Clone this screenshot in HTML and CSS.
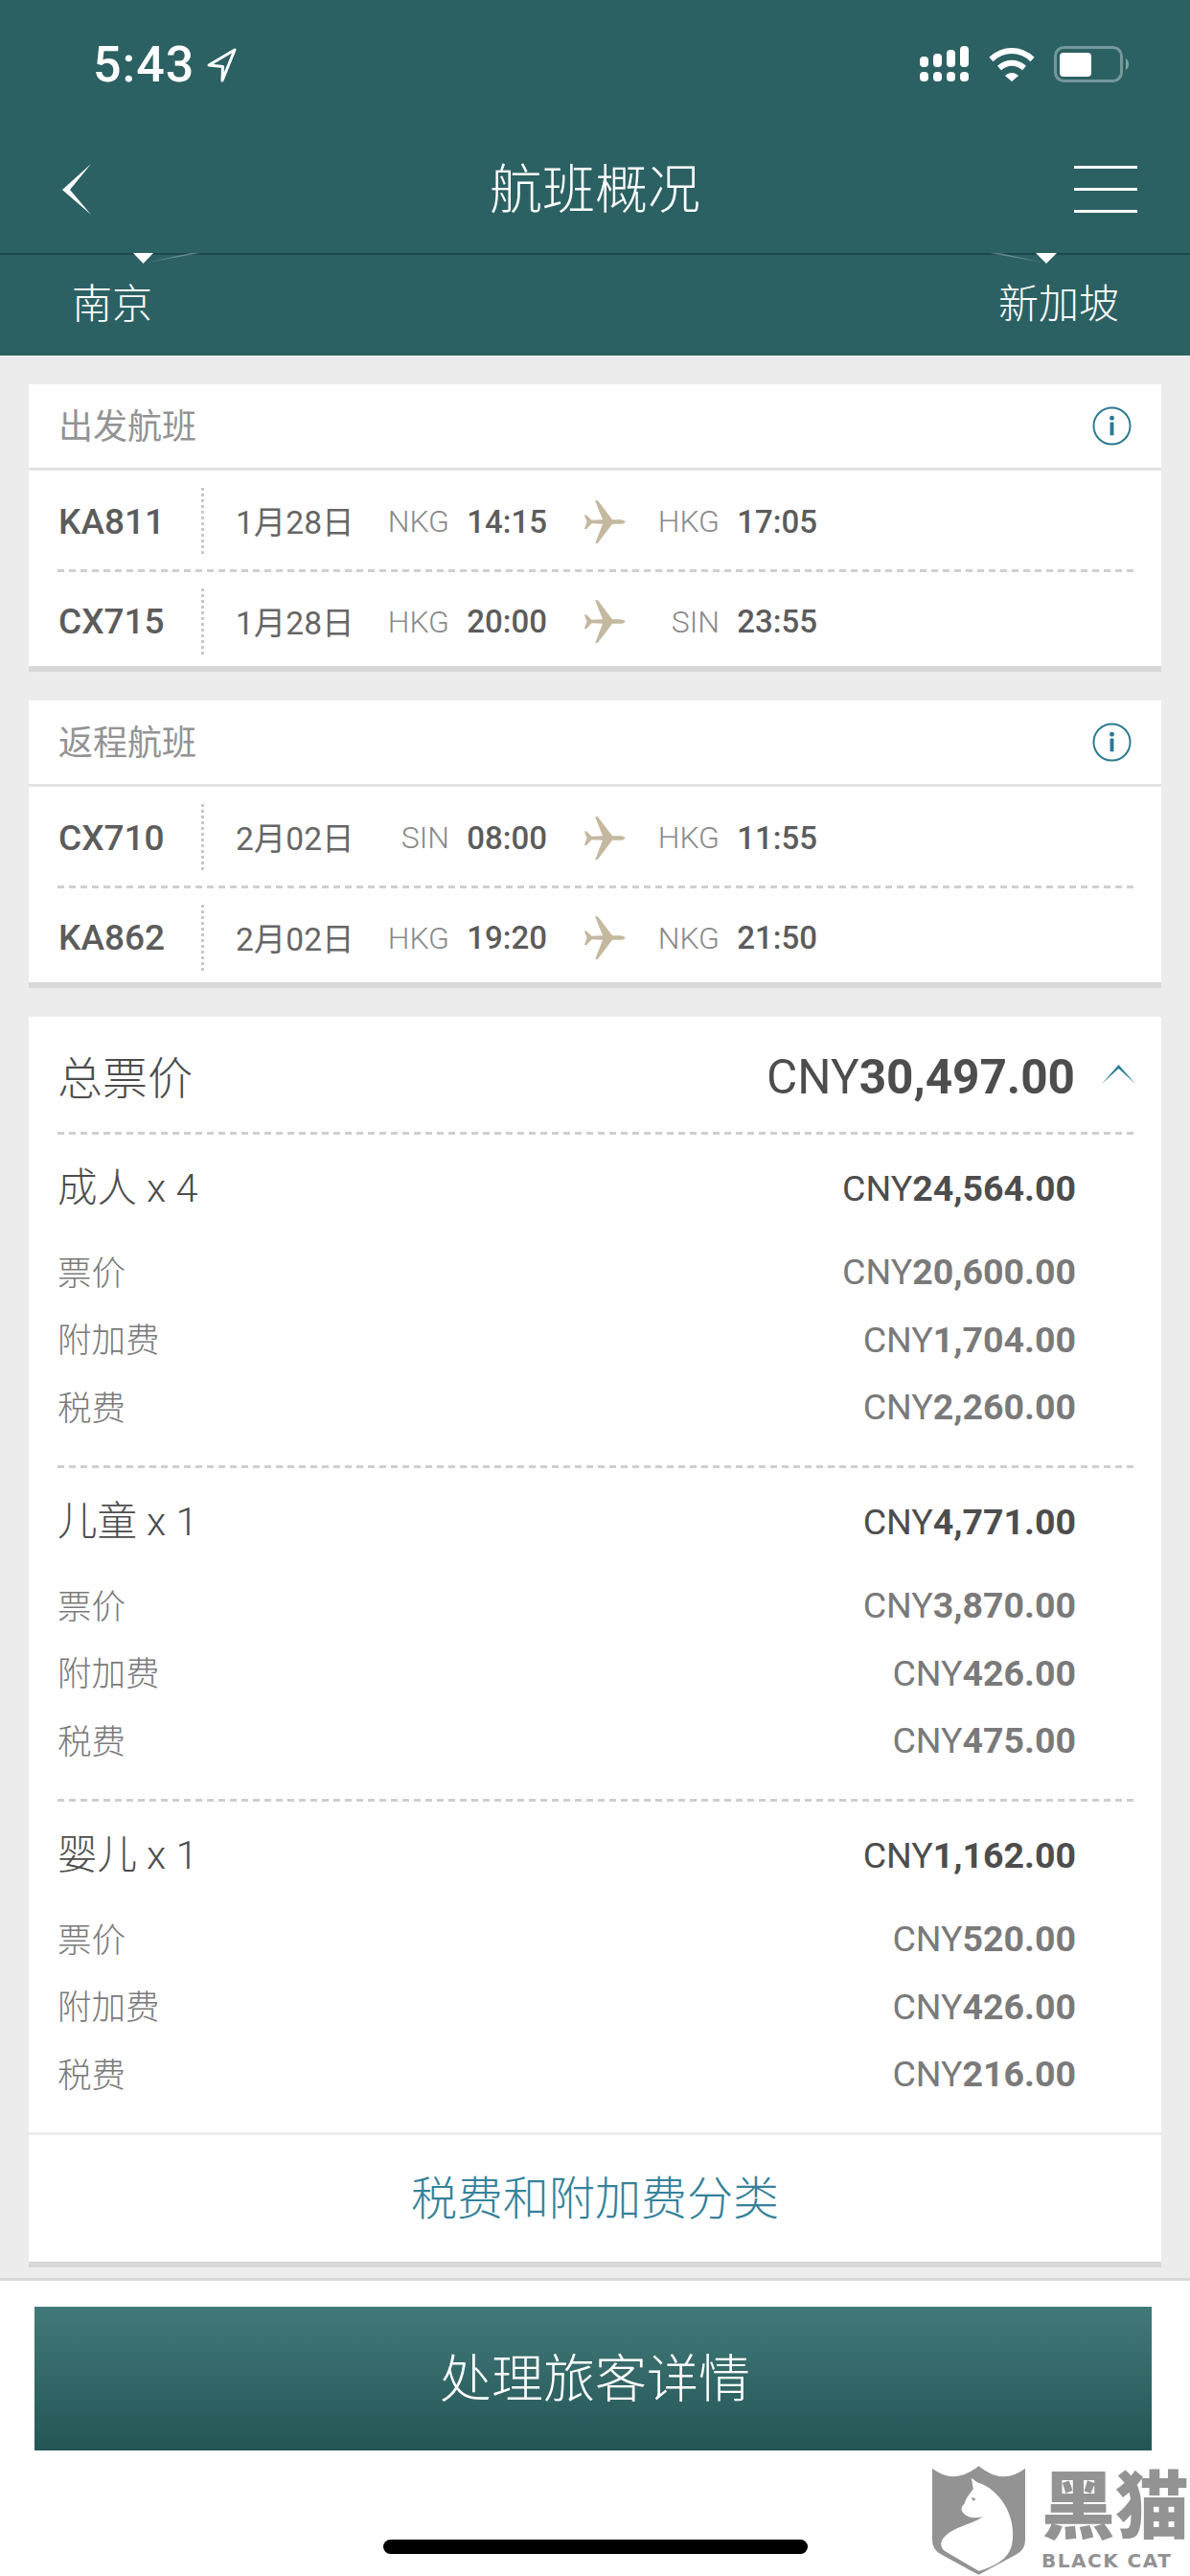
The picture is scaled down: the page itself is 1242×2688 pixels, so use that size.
FILE: index.html
```html
<!DOCTYPE html>
<html lang="zh-CN">
<head>
<meta charset="utf-8">
<title>航班概况</title>
<link rel="stylesheet" href="styles.css">
</head>
<body>
<div class="page">
  <header class="header">
    <div class="status">
      <div class="status-left">
        <span class="clock">5:43</span>
        <svg class="loc" viewBox="0 0 32 36"><path d="M30 2 L3 18 L17.500 19.500 L17 34 Z" fill="none" stroke="#fff" stroke-width="3" stroke-linejoin="round"/></svg>
      </div>
      <div class="status-right">
        <svg class="signal" viewBox="0 0 51 37" fill="#fff">
          <rect x="0" y="11" width="9" height="11" rx="4"/><rect x="14" y="8" width="9" height="14" rx="4"/><rect x="28" y="4" width="9" height="18" rx="4"/><rect x="42" y="0" width="9" height="22" rx="4"/>
          <rect x="0" y="27" width="9" height="10" rx="4"/><rect x="14" y="27" width="9" height="10" rx="4"/><rect x="28" y="27" width="9" height="10" rx="4"/><rect x="42" y="27" width="9" height="10" rx="4"/>
        </svg>
        <svg class="wifi" viewBox="0 0 48 37" fill="none" stroke="#fff" stroke-width="6">
          <path d="M2.500 14 C15 2 33 2 45.500 14"/><path d="M11 23 C19 16 29 16 37 23"/><path d="M17 31 L24 37 L31 31 C27 27 21 27 17 31 Z" fill="#fff" stroke="none"/>
        </svg>
        <svg class="battery" viewBox="0 0 80 38">
          <rect x="1.500" y="1.500" width="69" height="35" rx="9" fill="none" stroke="#fff" stroke-opacity=".35" stroke-width="3"/>
          <rect x="6" y="7" width="33" height="25" rx="4" fill="#fff"/>
          <path d="M75 13 C79 15 79 23 75 25 Z" fill="#fff" fill-opacity=".4"/>
        </svg>
      </div>
    </div>
    <nav class="nav">
      <svg class="back" viewBox="0 0 30 53"><path d="M30 0 L0 27 L30 53 L8 27 Z" fill="#fff"/></svg>
      <h1 class="nav-title">航班概况</h1>
      <div class="menu"><i></i><i></i><i></i></div>
    </nav>
    <div class="route">
      <svg class="marker marker-left" viewBox="0 0 80 12"><path d="M14 10 L70 0 L60 0 Z" fill="#fff" fill-opacity=".3"/><path d="M0 0 H21 L10.500 11 Z" fill="#fff"/></svg>
      <svg class="marker marker-right" viewBox="0 0 80 12"><path d="M66 10 L10 0 L20 0 Z" fill="#fff" fill-opacity=".3"/><path d="M58 0 H80 L69 11 Z" fill="#fff"/></svg>
      <span>南京</span>
      <span>新加坡</span>
    </div>
  </header>

  <main class="main">
    <section class="card">
      <div class="card-head">
        <span class="head-text">出发航班</span>
        <svg class="info" viewBox="0 0 42 42"><circle cx="21" cy="21" r="19.500" fill="none" stroke="#2b7890" stroke-width="2"/><circle cx="21" cy="12.500" r="2.500" fill="#2b7890"/><rect x="19" y="17" width="4" height="14" fill="#2b7890"/></svg>
      </div>
      <div class="flight">
        <span class="fno">KA811</span><span class="vdots"></span><span class="date">1月28日</span><span class="code">NKG</span><span class="time">14:15</span>
        <svg class="plane" viewBox="0 0 128 134"><path d="M128 67C128 71 120 74 108 74L88 74L44 132Q38 136 35 133L58 74L24 72L8 89L1 89L9 67L1 46L8 46L24 62L58 60L35 2Q38-2 44 2L88 60L108 60C120 60 128 63 128 67Z"/></svg>
        <span class="code">HKG</span><span class="time">17:05</span>
      </div>
      <div class="dash"></div>
      <div class="flight flight-last">
        <span class="fno">CX715</span><span class="vdots"></span><span class="date">1月28日</span><span class="code">HKG</span><span class="time">20:00</span>
        <svg class="plane" viewBox="0 0 128 134"><path d="M128 67C128 71 120 74 108 74L88 74L44 132Q38 136 35 133L58 74L24 72L8 89L1 89L9 67L1 46L8 46L24 62L58 60L35 2Q38-2 44 2L88 60L108 60C120 60 128 63 128 67Z"/></svg>
        <span class="code">SIN</span><span class="time">23:55</span>
      </div>
    </section>

    <section class="card">
      <div class="card-head">
        <span class="head-text">返程航班</span>
        <svg class="info" viewBox="0 0 42 42"><circle cx="21" cy="21" r="19.500" fill="none" stroke="#2b7890" stroke-width="2"/><circle cx="21" cy="12.500" r="2.500" fill="#2b7890"/><rect x="19" y="17" width="4" height="14" fill="#2b7890"/></svg>
      </div>
      <div class="flight">
        <span class="fno">CX710</span><span class="vdots"></span><span class="date">2月02日</span><span class="code">SIN</span><span class="time">08:00</span>
        <svg class="plane" viewBox="0 0 128 134"><path d="M128 67C128 71 120 74 108 74L88 74L44 132Q38 136 35 133L58 74L24 72L8 89L1 89L9 67L1 46L8 46L24 62L58 60L35 2Q38-2 44 2L88 60L108 60C120 60 128 63 128 67Z"/></svg>
        <span class="code">HKG</span><span class="time">11:55</span>
      </div>
      <div class="dash"></div>
      <div class="flight flight-last">
        <span class="fno">KA862</span><span class="vdots"></span><span class="date">2月02日</span><span class="code">HKG</span><span class="time">19:20</span>
        <svg class="plane" viewBox="0 0 128 134"><path d="M128 67C128 71 120 74 108 74L88 74L44 132Q38 136 35 133L58 74L24 72L8 89L1 89L9 67L1 46L8 46L24 62L58 60L35 2Q38-2 44 2L88 60L108 60C120 60 128 63 128 67Z"/></svg>
        <span class="code">NKG</span><span class="time">21:50</span>
      </div>
    </section>

    <section class="card">
      <div class="total">
        <span class="total-label">总票价</span>
        <span class="total-value">CNY<b>30,497.00</b></span>
        <svg class="chev" viewBox="0 0 35 20"><path d="M0 20 L17.500 0 L35 20 L17.500 4 Z" fill="#2b7f95"/></svg>
      </div>
      <div class="dash"></div>
      <div class="group">
        <div class="row row-head"><span class="label">成人 x 4</span><span class="amount">CNY<b>24,564.00</b></span></div>
        <div class="row"><span class="label">票价</span><span class="amount">CNY<b>20,600.00</b></span></div>
        <div class="row"><span class="label">附加费</span><span class="amount">CNY<b>1,704.00</b></span></div>
        <div class="row"><span class="label">税费</span><span class="amount">CNY<b>2,260.00</b></span></div>
      </div>
      <div class="dash"></div>
      <div class="group">
        <div class="row row-head"><span class="label">儿童 x 1</span><span class="amount">CNY<b>4,771.00</b></span></div>
        <div class="row"><span class="label">票价</span><span class="amount">CNY<b>3,870.00</b></span></div>
        <div class="row"><span class="label">附加费</span><span class="amount">CNY<b>426.00</b></span></div>
        <div class="row"><span class="label">税费</span><span class="amount">CNY<b>475.00</b></span></div>
      </div>
      <div class="dash"></div>
      <div class="group">
        <div class="row row-head"><span class="label">婴儿 x 1</span><span class="amount">CNY<b>1,162.00</b></span></div>
        <div class="row"><span class="label">票价</span><span class="amount">CNY<b>520.00</b></span></div>
        <div class="row"><span class="label">附加费</span><span class="amount">CNY<b>426.00</b></span></div>
        <div class="row"><span class="label">税费</span><span class="amount">CNY<b>216.00</b></span></div>
      </div>
      <div class="link">税费和附加费分类</div>
    </section>
  </main>

  <footer class="footer">
    <div class="cta">处理旅客详情</div>
    <div class="home"></div>
    <div class="mark">
      <svg class="shield" viewBox="0 0 290 340">
        <path d="M0 8Q70 62 145 0Q220 62 290 8V232Q290 262 262 276L145 340L28 276Q0 262 0 232Z" fill="#939393"/>
        <path d="M122 38L142 52C205 70 262 150 250 235C245 285 205 310 145 328L38 265C26 255 24 240 34 226C60 190 120 185 158 158C135 165 112 162 98 148C88 138 90 128 100 118C105 100 118 85 128 72Z" fill="#fff"/>
        <path d="M122 98L136 102L128 110Z" fill="#939393"/>
      </svg>
      <div class="mark-text">
        <span class="mark-cn">黑猫</span>
        <span class="mark-en">BLACK CAT</span>
      </div>
    </div>
  </footer>
</div>
</body>
</html>
```
FILE: styles.css
```css
* { box-sizing: border-box; }
html, body { margin: 0; padding: 0; }
body {
  width: 1242px;
  height: 2688px;
  overflow: hidden;
  background: #fff;
  font-family: Roboto, "Noto Sans CJK SC", sans-serif;
}
.page { position: relative; width: 1242px; height: 2688px; display: flex; flex-direction: column; }

/* header */
.header { background: #2c6163; color: #fff; height: 371px; display: flex; flex-direction: column; }
.status { height: 130px; display: flex; justify-content: space-between; padding: 48px 62px 0 97px; }
.status-left { display: flex; align-items: flex-start; }
.clock { font-size: 52px; font-weight: 500; line-height: 40px; letter-spacing: 1px; height: 40px; }
.loc { width: 32px; height: 36px; margin: 2px 0 0 12px; }
.status-right { display: flex; align-items: flex-start; }
.signal { width: 51px; height: 37px; }
.wifi { width: 48px; height: 37px; margin-left: 21px; }
.battery { width: 80px; height: 38px; margin-left: 20px; }

.nav { height: 136px; border-bottom: 2px solid #1e474b; display: flex; align-items: center; justify-content: space-between; padding: 0 55px 0 65px; position: relative; }
.back { width: 30px; height: 53px; }
.nav-title { position: absolute; left: 0; right: 0; top: 0; margin: 0; text-align: center; font-size: 55px; font-weight: 300; line-height: 136px; }
.menu { display: flex; flex-direction: column; gap: 20px; width: 66px; }
.menu i { display: block; height: 3px; background: #fff; }

.route { position: relative; flex: 1; display: flex; justify-content: space-between; align-items: center; padding: 0 74px 10px 75px; font-size: 42px; font-weight: 300; }
.marker { position: absolute; top: -2px; width: 80px; height: 12px; }
.marker-left { left: 139px; }
.marker-right { left: 1023px; }

/* main */
.main { background: #ececec; padding: 30px 30px 11px; display: flex; flex-direction: column; gap: 30px; }
.card { background: #fff; border-bottom: 6px solid #d8d8d8; }
.card-head { height: 90px; border-bottom: 3px solid #e3e3e3; display: flex; align-items: center; justify-content: space-between; padding: 0 31px 0 31px; font-size: 36px; color: #939393; }
.head-text { padding-bottom: 6px; }
.info { width: 41px; height: 41px; }

.flight { height: 103px; display: grid; grid-template-columns: 149px 3px 175px 81px 102px 116px 64px 102px; align-items: center; padding: 3px 0 0 31px; }
.flight-last { height: 98px; padding-top: 5px; }
.fno { font-size: 37px; font-weight: 500; color: #5c5c5c; }
.vdots { width: 3px; height: 70px; background: repeating-linear-gradient(to bottom, #c8c8c8 0 3px, transparent 3px 6px); }
.date { font-size: 33.500px; color: #666; padding: 0 0 3px 33px; white-space: nowrap; }
.code { font-size: 32px; font-weight: 300; color: #8a8a8a; justify-self: end; white-space: nowrap; }
.time { font-size: 33px; font-weight: 500; color: #5c5c5c; justify-self: end; }
.plane { width: 44px; height: 45px; justify-self: center; margin-left: 4px; fill: #c4b9a0; }

.dash { height: 3px; margin: 0 28px 0 30px; background: repeating-linear-gradient(to right, #cfcfcf 0 7px, transparent 7px 12px); }

.total { height: 120px; display: flex; align-items: center; padding: 6px 27px 0 30px; }
.total-label { font-size: 47px; font-weight: 300; color: #4d4d4d; padding-bottom: 6px; }
.total-value { margin-left: auto; font-size: 49.500px; font-weight: 400; color: #4d4d4d; }
.total-value b, .amount b { font-weight: 700; }
.chev { width: 35px; height: 20px; margin-left: 28px; margin-bottom: 6px; }

.group { padding: 4px 89px 25.5px 30px; }
.row { height: 70.5px; display: flex; align-items: center; justify-content: space-between; color: #7a7a7a; }
.row-head { height: 104px; color: #4d4d4d; }
.label { font-size: 35.500px; font-weight: 300; padding-bottom: 4px; }
.row-head .label { font-size: 41.500px; padding-bottom: 8px; }
.amount { font-size: 37.500px; font-weight: 400; }

.link { height: 135px; border-top: 3px solid #ececec; display: flex; align-items: center; justify-content: center; padding-bottom: 8px; font-size: 48px; font-weight: 300; color: #35829b; }

/* footer */
.footer { border-top: 3px solid #d8d8d8; padding: 27px 40px 0 36px; flex: 1; background: #fff; }
.cta { height: 150px; background: linear-gradient(to bottom, #427a79, #245555); color: #fff; display: flex; align-items: center; justify-content: center; padding: 0 0 8px 4px; font-size: 54px; font-weight: 300; }
.home { width: 443px; height: 15px; margin: 93px 0 0 364px; background: #000; border-radius: 8px; }
.mark { position: absolute; left: 973px; top: 2573px; display: flex; color: #939393; }
.shield { width: 97px; height: 114px; }
.mark-text { display: flex; flex-direction: column; margin-left: 17px; }
.mark-cn { font-size: 77px; font-weight: 900; line-height: 88px; white-space: nowrap; }
.mark-en { font-family: "DejaVu Sans", sans-serif; font-size: 20px; font-weight: 700; letter-spacing: 1.500px; line-height: 22px; white-space: nowrap; }
```
